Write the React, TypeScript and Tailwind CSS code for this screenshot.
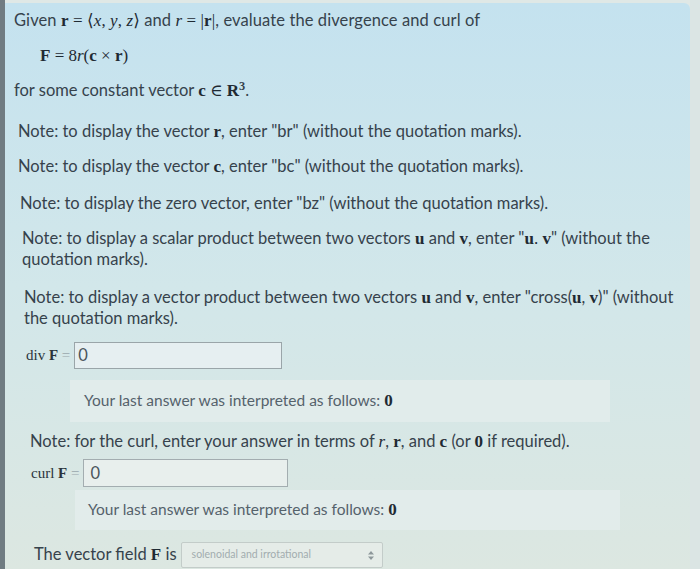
import React from 'react';

const serif = { fontFamily: '"Liberation Serif", "DejaVu Serif", serif' };

function M({ children, b, i }: { children: React.ReactNode; b?: boolean; i?: boolean }) {
  return (
    <span
      style={serif}
      className={`text-[17px] ${b ? 'font-bold' : ''} ${i ? 'italic' : ''} text-[#1f2a33]`}
    >
      {children}
    </span>
  );
}

function Feedback({ className }: { className: string }) {
  return (
    <div className={`flex items-center bg-[#e3eeec]/80 text-[15.5px] text-[#55626b] ${className}`}>
      Your last answer was interpreted as follows:&nbsp;<M b>0</M>
    </div>
  );
}

export default function App() {
  return (
    <div className="flex h-[569px] w-[700px] overflow-hidden bg-[#dfe8e6]">
      <div className="w-[5px] bg-[#707c82]" />
      <div
        className="mt-[3px] flex w-[685px] flex-col rounded-tr-md bg-gradient-to-b from-[#c4e2ef] via-[#d2e7ea] to-[#dce7e1] text-[16.5px] text-[#36424c]"
        style={{ fontFamily: 'Lato, "Open Sans", sans-serif' }}
      >
        <p className="pl-[9px] pt-[6px] leading-[22px] tracking-[0.1px]">
          Given <M b>r</M> <M>=</M> <M>⟨</M>
          <M i>x</M>
          <M>, </M>
          <M i>y</M>
          <M>, </M>
          <M i>z</M>
          <M>⟩</M> and <M i>r</M> <M>=</M> <M>|</M>
          <M b>r</M>
          <M>|</M>, evaluate the divergence and curl of
        </p>
        <p className="pl-[35px] pt-[12px] leading-[22px]">
          <M b>F</M> <M>= 8</M>
          <M i>r</M>
          <M>(</M>
          <M b>c</M> <M>×</M> <M b>r</M>
          <M>)</M>
        </p>
        <p className="pl-[9px] pt-[12px] leading-[22px]">
          for some constant vector <M b>c</M> <M>∈</M> <M b>R</M>
          <sup style={serif} className="font-bold">3</sup>.
        </p>
        <p className="pl-[13px] pt-[18px] leading-[22px]">
          Note: to display the vector <M b>r</M>, enter "br" (without the quotation marks).
        </p>
        <p className="pl-[13px] pt-[12px] leading-[22px]">
          Note: to display the vector <M b>c</M>, enter "bc" (without the quotation marks).
        </p>
        <p className="pl-[15px] pt-[14px] leading-[22px]">
          Note: to display the zero vector, enter "bz" (without the quotation marks).
        </p>
        <p className="w-[650px] pl-[17px] pt-[14px] leading-[21px]">
          Note: to display a scalar product between two vectors <M b>u</M> and <M b>v</M>, enter "
          <M b>u</M>
          <M>. </M>
          <M b>v</M>" (without the quotation marks).
        </p>
        <p className="w-[672px] pl-[19px] pt-[17px] leading-[21px]">
          Note: to display a vector product between two vectors <M b>u</M> and <M b>v</M>, enter
          "cross(<M b>u</M>, <M b>v</M>)" (without the quotation marks).
        </p>
        <div className="flex items-center pl-[21px] pt-[13px]">
          <span style={serif} className="text-[15px] text-[#2a343c]">
            div <b>F</b> <span className="text-[#9aa8ad]">=</span>
          </span>
          <div className="ml-[4px] flex h-[27px] w-[208px] items-center border border-[#9aa5a9] bg-[#e6eff1] pl-[3px] text-[#4a555c]">
            0
          </div>
        </div>
        <Feedback className="ml-[65px] mt-[11px] h-[42px] w-[540px] pl-[14px]" />
        <p className="pl-[25px] pt-[8px] leading-[22px]">
          Note: for the curl, enter your answer in terms of <M i>r</M>, <M b>r</M>, and <M b>c</M>{' '}
          (or <M b>0</M> if required).
        </p>
        <div className="flex items-center pl-[26px] pt-[6px]">
          <span style={serif} className="text-[15px] text-[#2a343c]">
            curl <b>F</b> <span className="text-[#9aa8ad]">=</span>
          </span>
          <div className="ml-[4px] flex h-[28px] w-[205px] items-center border border-[#a3adb0] bg-[#e8efed] pl-[6px] text-[#4a555c]">
            0
          </div>
        </div>
        <Feedback className="ml-[70px] mt-[3px] h-[40px] w-[545px] pl-[13px]" />
        <div className="flex items-center pl-[29px] pt-[12px]">
          <span>
            The vector field <M b>F</M> is
          </span>
          <div className="ml-[4px] flex h-[26px] w-[202px] items-center justify-between rounded-[2px] border border-[#c3ccc9] bg-[#e5ece8] pl-[10px] pr-[8px] text-[10.5px] text-[#a2acaf]">
            <span>solenoidal and irrotational</span>
            <svg width="6" height="9" viewBox="0 0 6 9" fill="#8d979a">
              <path d="M3 0 L6 3.5 H0 Z M3 9 L0 5.5 H6 Z" />
            </svg>
          </div>
        </div>
      </div>
      <div className="flex-1 bg-[#dbe5e4]" />
    </div>
  );
}
